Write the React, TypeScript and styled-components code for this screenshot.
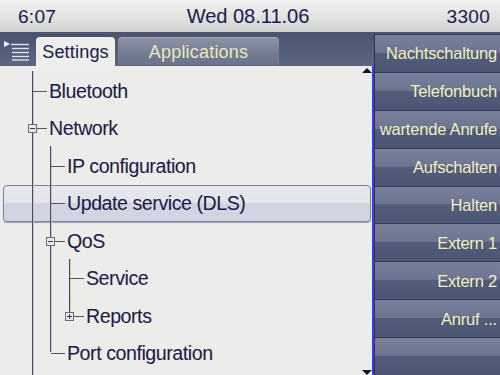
import React from 'react';
import styled, { createGlobalStyle } from 'styled-components';

const FONT = `"Liberation Sans", Arial, sans-serif`;

const GlobalStyle = createGlobalStyle`
    html, body {
        margin: 0;
        padding: 0;
        background: #ecedea;
    }
    * {
        box-sizing: border-box;
    }
`;

type Joint = 'tee' | 'corner';

interface TreeItem {
    label: string;
    pipes: number;
    joint: Joint;
    box?: 'minus' | 'plus';
    selected?: boolean;
}

const treeItems: TreeItem[] = [
    { label: 'Bluetooth', pipes: 0, joint: 'tee' },
    { label: 'Network', pipes: 0, joint: 'tee', box: 'minus' },
    { label: 'IP configuration', pipes: 1, joint: 'tee' },
    { label: 'Update service (DLS)', pipes: 1, joint: 'tee', selected: true },
    { label: 'QoS', pipes: 1, joint: 'tee', box: 'minus' },
    { label: 'Service', pipes: 2, joint: 'tee' },
    { label: 'Reports', pipes: 2, joint: 'corner', box: 'plus' },
    { label: 'Port configuration', pipes: 1, joint: 'corner' },
];

const softKeys = [
    'Nachtschaltung',
    'Telefonbuch',
    'wartende Anrufe',
    'Aufschalten',
    'Halten',
    'Extern 1',
    'Extern 2',
    'Anruf ...',
    '',
];

const MenuIcon = () => (
    <svg width="28" height="24" viewBox="0 0 28 24">
        <polygon points="1,3 7,6 1,9" fill="#f4f4f8" />
        <g stroke="#dfe1ea" strokeWidth="1.4">
            <line x1="8" y1="6.5" x2="26" y2="6.5" />
            <line x1="9" y1="10.5" x2="26" y2="10.5" />
            <line x1="9" y1="14.5" x2="26" y2="14.5" />
            <line x1="9" y1="18.5" x2="26" y2="18.5" />
            <line x1="9" y1="22" x2="26" y2="22" />
        </g>
    </svg>
);

export default function App() {
    return (
        <>
            <GlobalStyle />
            <Screen>
                <Header>
                    <HeaderText>6:07</HeaderText>
                    <HeaderDate>Wed 08.11.06</HeaderDate>
                    <HeaderRight>3300</HeaderRight>
                </Header>
                <Body>
                    <LeftColumn>
                        <TabBar>
                            <MenuButton>
                                <MenuIcon />
                            </MenuButton>
                            <Tab $active>Settings</Tab>
                            <Tab>Applications</Tab>
                        </TabBar>
                        <Content>
                            <ScrollArrow $dir="up" />
                            {treeItems.map((item) => (
                                <Row key={item.label} $selected={item.selected}>
                                    {Array.from({ length: item.pipes }).map(
                                        (_, i) => (
                                            <Pipe key={i} $first={i === 0} />
                                        ),
                                    )}
                                    <JointCell $joint={item.joint}>
                                        {item.box && (
                                            <ExpandBox>
                                                <BoxBar />
                                                {item.box === 'plus' && (
                                                    <BoxBar $vertical />
                                                )}
                                            </ExpandBox>
                                        )}
                                    </JointCell>
                                    <Label>{item.label}</Label>
                                </Row>
                            ))}
                            <TrunkTail />
                            <ScrollArrow $dir="down" />
                        </Content>
                    </LeftColumn>
                    <SoftKeys>
                        {softKeys.map((key, i) => (
                            <SoftKey key={i}>{key}</SoftKey>
                        ))}
                    </SoftKeys>
                </Body>
            </Screen>
        </>
    );
}

const Screen = styled.div`
    width: 500px;
    height: 375px;
    display: flex;
    flex-direction: column;
    overflow: hidden;
    font-family: ${FONT};
    background: #ecedea;
`;

const Header = styled.div`
    height: 34px;
    flex-shrink: 0;
    display: grid;
    grid-template-columns: 1fr auto 1fr;
    align-items: center;
    padding: 1px 10px 0 18px;
    background: linear-gradient(#f1f2f1, #dcdedc 70%, #cfd1d0);
    border-bottom: 2px solid #4e546a;
`;

const HeaderText = styled.div`
    font-size: 19px;
    color: #1c1c62;
    letter-spacing: 0.3px;
    text-shadow: 0.6px 0 0 rgba(200, 190, 40, 0.45);
`;

const HeaderDate = styled(HeaderText)`
    margin-right: 12px;
    font-size: 20px;
    letter-spacing: 0;
`;

const HeaderRight = styled(HeaderText)`
    text-align: right;
`;

const Body = styled.div`
    flex: 1;
    display: flex;
    min-height: 0;
`;

const LeftColumn = styled.div`
    width: 374px;
    display: flex;
    flex-direction: column;
`;

const TabBar = styled.div`
    height: 32px;
    flex-shrink: 0;
    display: flex;
    align-items: flex-end;
    gap: 3px;
    padding: 0 0 0 3px;
    background: linear-gradient(#4a536f, #5d6782);
`;

const MenuButton = styled.div`
    width: 30px;
    height: 30px;
    display: flex;
    align-items: flex-start;
    padding-top: 2px;
`;

const Tab = styled.div<{ $active?: boolean }>`
    height: 29px;
    display: flex;
    align-items: center;
    justify-content: center;
    border-radius: 4px 4px 0 0;
    font-size: 18px;
    letter-spacing: 0.2px;
    padding-top: 1px;
    ${({ $active }) =>
        $active
            ? `
        width: 79px;
        background: #eeefec;
        color: #1c1c62;
        text-shadow: 0.6px 0 0 rgba(200, 190, 40, 0.45);
    `
            : `
        width: 161px;
        height: 28px;
        margin-bottom: 1px;
        background: linear-gradient(#8c92a6, #737a92 60%, #6c738c);
        border-top: 1px solid #a3a8b8;
        color: #e9e9bc;
    `}
`;

const Content = styled.div`
    position: relative;
    flex: 1;
    padding-top: 6px;
    background: #ecedea;
    border-right: 2px solid #3a3ae6;
    overflow: hidden;
`;

const Row = styled.div<{ $selected?: boolean }>`
    height: 37.5px;
    display: flex;
    align-items: stretch;
    ${({ $selected }) =>
        $selected
            ? `
        margin: 0 1px 0 3px;
        padding-left: 28px;
        border: 1px solid #7c82a2;
        border-radius: 4px;
        background: linear-gradient(#e7e8ec 0%, #e3e4ea 48%, #d2d4e1 50%, #d2d4e0 100%);
        box-shadow: 0 1px 1px rgba(60, 64, 90, 0.45);
    `
            : `
        padding-left: 32px;
    `}
`;

const VLine = `
    content: '';
    position: absolute;
    left: 0;
    width: 1px;
    background: #3c3cc4;
    box-shadow: 1px 0 0 rgba(214, 206, 70, 0.8);
`;

const Pipe = styled.div<{ $first?: boolean }>`
    position: relative;
    width: ${({ $first }) => ($first ? '18px' : '19px')};
    flex-shrink: 0;
    &::before {
        ${VLine}
        top: -1px;
        bottom: -1px;
    }
`;

const JointCell = styled.div<{ $joint: Joint }>`
    position: relative;
    width: 17px;
    flex-shrink: 0;
    &::before {
        ${VLine}
        top: -1px;
        ${({ $joint }) => ($joint === 'tee' ? 'bottom: -1px;' : 'height: 50%;')}
    }
    &::after {
        content: '';
        position: absolute;
        left: 1px;
        top: 50%;
        width: 14px;
        height: 1px;
        background: #55575f;
    }
`;

const ExpandBox = styled.span`
    position: absolute;
    z-index: 1;
    left: -4px;
    top: calc(50% - 4px);
    width: 9px;
    height: 9px;
    border: 1px solid #6a6c80;
    background: #e6e7e6;
`;

const BoxBar = styled.span<{ $vertical?: boolean }>`
    position: absolute;
    background: #3a3c50;
    ${({ $vertical }) =>
        $vertical
            ? 'left: 3px; top: 1px; width: 1px; height: 5px;'
            : 'left: 1px; top: 3px; width: 5px; height: 1px;'}
`;

const Label = styled.div`
    display: flex;
    align-items: center;
    padding-top: 1px;
    font-size: 19.5px;
    color: #1b1b5c;
    letter-spacing: -0.4px;
    white-space: nowrap;
    text-shadow: 0.7px 0 0 rgba(205, 195, 40, 0.45);
`;

const TrunkTail = styled.div`
    position: relative;
    height: 10px;
    margin-left: 32px;
    &::before {
        ${VLine}
        top: -1px;
        bottom: 0;
    }
`;

const ScrollArrow = styled.div<{ $dir: 'up' | 'down' }>`
    position: absolute;
    right: 0;
    width: 0;
    height: 0;
    border-left: 5px solid transparent;
    border-right: 5px solid transparent;
    ${({ $dir }) =>
        $dir === 'up'
            ? 'top: 2px; border-bottom: 5px solid #16162a;'
            : 'bottom: 0; border-top: 5px solid #16162a;'}
`;

const SoftKeys = styled.div`
    width: 126px;
    display: flex;
    flex-direction: column;
    background: #4b5372;
    border-left: 1px solid #2e3450;
`;

const SoftKey = styled.div`
    flex: 1;
    display: flex;
    align-items: center;
    justify-content: flex-end;
    padding: 1px 3px 0 0;
    border-top: 1px solid #363c58;
    background: linear-gradient(
        #7a819c 0%,
        #6c7490 47%,
        #545c7b 50%,
        #4d5574 100%
    );
    color: #efefbf;
    font-size: 16.5px;
    letter-spacing: -0.2px;
    white-space: nowrap;
    overflow: hidden;
`;
